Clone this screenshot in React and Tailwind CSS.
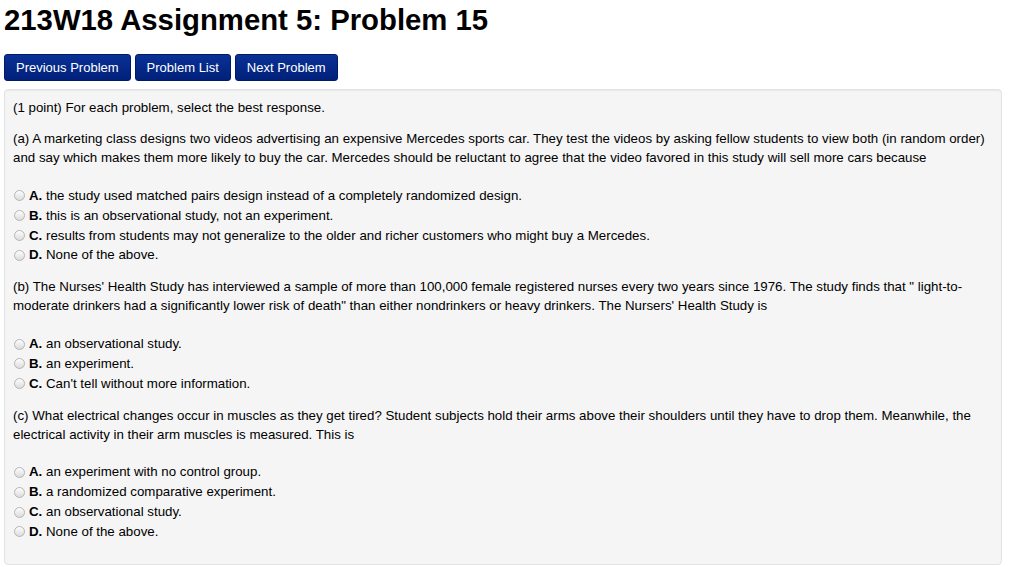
import React from 'react';

const Option = ({ letter, children }) => (
  <div className="flex items-center h-[19.8px]">
    <span className="inline-block w-[11px] h-[11px] rounded-full border border-[#b5b5b5] bg-gradient-to-b from-[#fdfdfd] to-[#dcdcdc] mr-[4px] ml-[1px]"></span>
    <span>
      <b>{letter}.</b> {children}
    </span>
  </div>
);

const Question = ({ text, options, first }) => (
  <div className={first ? '' : 'mt-[12px]'}>
    <p className="leading-[19px]">{text}</p>
    <div className="mt-[19px]">
      {options.map((o) => (
        <Option key={o[0]} letter={o[0]}>{o[1]}</Option>
      ))}
    </div>
  </div>
);

export default function App() {
  const buttons = ['Previous Problem', 'Problem List', 'Next Problem'];
  return (
    <div className="bg-white min-h-screen px-[4px] pt-[3px] text-black font-['Liberation_Sans',Arial,sans-serif]">
      <h1 className="text-[29.3px] font-bold leading-[34px]">213W18 Assignment 5: Problem 15</h1>

      <div className="flex gap-[4px] mt-[17px]">
        {buttons.map((b) => (
          <button
            key={b}
            className="h-[27px] px-[11px] rounded-[3px] text-white text-[13px] bg-gradient-to-b from-[#0b3196] to-[#01207a] border border-[#011a66]"
          >
            {b}
          </button>
        ))}
      </div>

      <div className="mt-[8px] w-[998px] h-[476px] bg-[#f5f5f5] border border-[#e3e3e3] rounded-[4px] shadow-[inset_0_1px_1px_rgba(0,0,0,0.05)] pl-[8px] pr-[9px] pt-[8px] text-[13.3px] leading-[20px]">
        <p className="leading-[20px]">(1 point) For each problem, select the best response.</p>

        <div className="mt-[11px]">
          <Question
            first
            text="(a) A marketing class designs two videos advertising an expensive Mercedes sports car. They test the videos by asking fellow students to view both (in random order) and say which makes them more likely to buy the car. Mercedes should be reluctant to agree that the video favored in this study will sell more cars because"
            options={[
              ['A', 'the study used matched pairs design instead of a completely randomized design.'],
              ['B', 'this is an observational study, not an experiment.'],
              ['C', 'results from students may not generalize to the older and richer customers who might buy a Mercedes.'],
              ['D', 'None of the above.'],
            ]}
          />
          <Question
            text={'(b) The Nurses\' Health Study has interviewed a sample of more than 100,000 female registered nurses every two years since 1976. The study finds that " light-to-moderate drinkers had a significantly lower risk of death" than either nondrinkers or heavy drinkers. The Nursers\' Health Study is'}
            options={[
              ['A', 'an observational study.'],
              ['B', 'an experiment.'],
              ['C', "Can't tell without more information."],
            ]}
          />
          <Question
            text="(c) What electrical changes occur in muscles as they get tired? Student subjects hold their arms above their shoulders until they have to drop them. Meanwhile, the electrical activity in their arm muscles is measured. This is"
            options={[
              ['A', 'an experiment with no control group.'],
              ['B', 'a randomized comparative experiment.'],
              ['C', 'an observational study.'],
              ['D', 'None of the above.'],
            ]}
          />
        </div>
      </div>
    </div>
  );
}
